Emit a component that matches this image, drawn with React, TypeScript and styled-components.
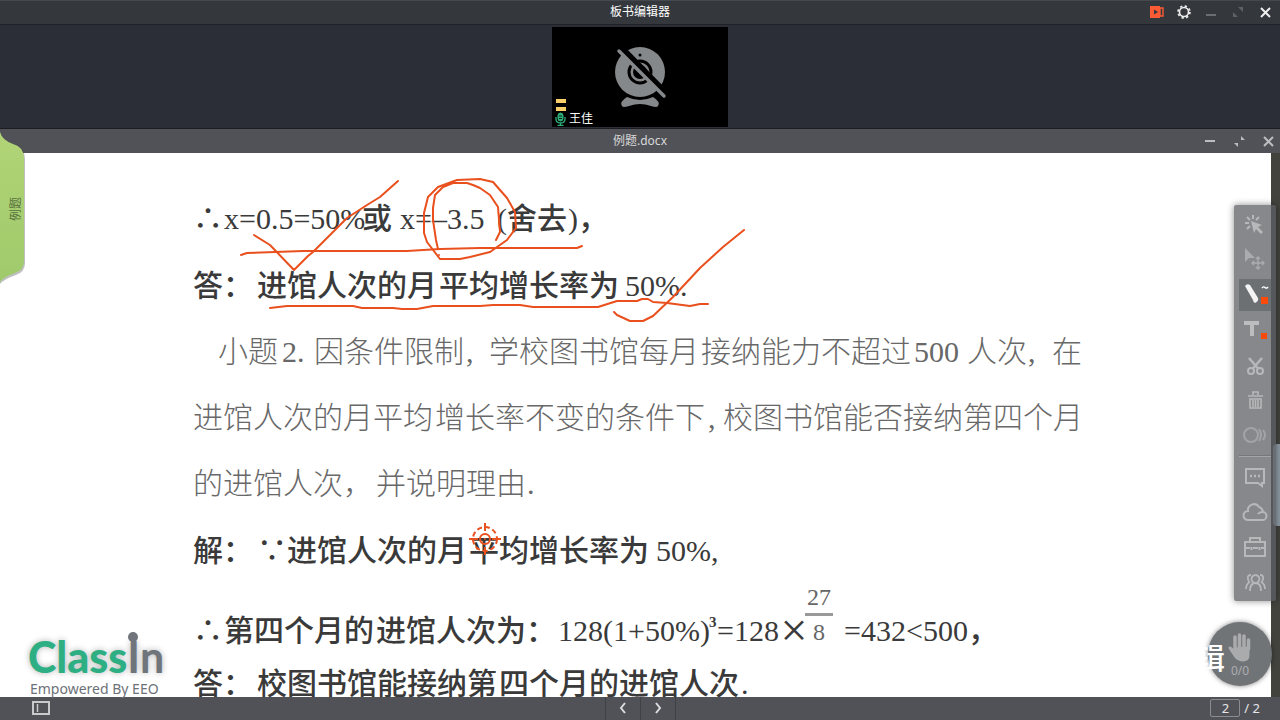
import React from "react";
import styled, { createGlobalStyle } from "styled-components";

const ui = `"Noto Sans", "Noto Sans CJK SC", sans-serif`;
const cjk = `"Noto Sans CJK SC", sans-serif`;
const serif = `"Liberation Serif", "Noto Sans CJK SC", serif`;
const ink = "#e9501e";

const GlobalStyle = createGlobalStyle`
  * { box-sizing: border-box; }
  body { margin: 0; font-family: ${ui}; background: #2b2e36; }
  button { border: 0; padding: 0; background: none; color: inherit; font: inherit; }
  svg { display: block; }
`;

const Shell = styled.div`
  position: relative;
  display: flex;
  flex-direction: column;
  height: 100vh;
  overflow: hidden;
`;

const Bar = styled.header<{ $tone: "dark" | "light" }>`
  display: grid;
  grid-template-columns: 1fr auto 1fr;
  align-items: center;
  flex: none;
  height: ${(p) => (p.$tone === "dark" ? 25 : 24)}px;
  background: ${(p) => (p.$tone === "dark" ? "#34373c" : "#515257")};
  box-shadow: ${(p) => (p.$tone === "dark" ? "inset 0 1px #45484d" : "none")};
  border-bottom: ${(p) => (p.$tone === "dark" ? "1px solid #1f2126" : "0")};
  color: ${(p) => (p.$tone === "dark" ? "#ffffff" : "#d8d8da")};
`;

const BarTitle = styled.h1`
  grid-column: 2;
  margin: 0;
  font: 400 12px/20px ${ui};
`;

const BarActions = styled.div<{ $tight?: boolean }>`
  display: flex;
  justify-content: flex-end;
  gap: ${(p) => (p.$tight ? 13 : 11)}px;
  padding-right: ${(p) => (p.$tight ? 4 : 7)}px;
`;

const BarButton = styled.button`
  width: 16px;
  height: 16px;
`;

const VideoStrip = styled.section`
  display: flex;
  justify-content: center;
  flex: none;
  height: 104px;
  padding-top: 2px;
  background: #2b2e36;
  border-bottom: 1px solid #1b1d22;
`;

const VideoTile = styled.div`
  display: flex;
  flex-direction: column;
  justify-content: flex-end;
  position: relative;
  width: 176px;
  height: 100px;
  padding-left: 3px;
  background: #000;
`;

const CameraOff = styled.svg`
  position: absolute;
  left: 58px;
  top: 16px;
`;

const Levels = styled.div`
  display: grid;
  gap: 4px;
  width: 10px;
  margin-left: 1px;
  i { height: 4px; background: #f8cf68; }
`;

const Person = styled.div`
  display: flex;
  align-items: center;
  gap: 3px;
  height: 16px;
  color: #fff;
  font-size: 12px;
  line-height: 18px;
`;

const Workspace = styled.main`
  position: relative;
  display: flex;
  flex: 1;
  min-height: 0;
  background: #fff;
`;

const Paper = styled.article`
  flex: 1;
  min-width: 0;
  padding: 32px 0 0 193px;
  overflow: hidden;
`;

const Line = styled.p<{ $kind?: "bold" | "plain" | "fraction" | "last" }>`
  display: flex;
  align-items: flex-end;
  margin: 0;
  white-space: pre;
  font-size: 30px;
  height: ${(p) => ({ bold: 67, plain: 66, fraction: 80, last: 40 })[p.$kind ?? "bold"]}px;
  --line: ${(p) => (p.$kind === "last" ? 40 : 66)}px;
  color: ${(p) => (p.$kind === "plain" ? "#686868" : "#3a3a3a")};
  font-weight: ${(p) => (p.$kind === "plain" ? 300 : 500)};
`;

const Run = styled.span<{ $w: number; $latin?: boolean }>`
  flex: none;
  width: ${(p) => p.$w}px;
  font-family: ${(p) => (p.$latin ? serif : cjk)};
  line-height: ${(p) => (p.$latin ? "var(--line)" : "calc(var(--line) + 6px)")};
`;

const Power = styled.sup`
  flex: none;
  width: 8px;
  height: 66px;
  font: 700 15px/48px ${serif};
`;

const Fraction = styled.span`
  display: flex;
  flex-direction: column;
  align-items: center;
  flex: none;
  width: 28px;
  margin: 0 11px 18px 0;
  font: 400 24px/28px ${serif};
  color: #666;
  i { width: 28px; height: 3px; margin: 2px 0; background: #999; }
`;

const ScrollTrack = styled.div`
  display: flex;
  justify-content: flex-end;
  flex: none;
  width: 9px;
  padding-top: 291px;
  background: #43433e;
`;

const ScrollThumb = styled.div`
  width: 7px;
  height: 82px;
  border-radius: 4px 0 0 4px;
  background: #8f9ca6;
`;

const Ink = styled.svg`
  position: absolute;
  left: 0;
  top: 0;
  fill: none;
  stroke: ${ink};
  stroke-width: 2;
  stroke-linecap: round;
  stroke-linejoin: round;
  pointer-events: none;
`;

const SideTab = styled.button`
  position: absolute;
  left: 0;
  top: 130px;
  width: 28px;
  height: 158px;
`;

const SideLabel = styled.span`
  position: absolute;
  left: 2px;
  top: 70px;
  width: 25px;
  transform: rotate(-90deg);
  font: 400 12px/18px ${cjk};
  color: #56703c;
`;

const Tools = styled.nav`
  position: absolute;
  right: 4px;
  top: 52px;
  width: 42px;
  padding: 2px 5px 1px;
  background: rgba(92, 94, 100, 0.74);
  border-radius: 2px;
  box-shadow: 0 0 7px rgba(0, 0, 0, 0.45);
`;

const Tool = styled.button<{ $active?: boolean }>`
  display: block;
  width: 32px;
  height: 35px;
  background: ${(p) => (p.$active ? "linear-gradient(transparent 2px, #6c7073 2px, #6c7073 34px, transparent 34px)" : "none")};
`;

const Divider = styled.hr`
  height: 2px;
  margin: 3px 0;
  border: 0;
  border-top: 1px solid #75787c;
  background: #a3a5a8;
`;

const Hand = styled.button`
  position: absolute;
  right: 8px;
  top: 469px;
  display: flex;
  flex-direction: column;
  align-items: center;
  width: 64px;
  height: 64px;
  padding-top: 9px;
  border-radius: 50%;
  background: #717477;
  box-shadow: 0 0 5px rgba(0, 0, 0, 0.5);
  color: #aaacaf;
  font-size: 12px;
  line-height: 16px;
`;

const Caption = styled.span`
  position: absolute;
  right: 55px;
  top: 483px;
  color: #fff;
  font: 500 30px/40px ${cjk};
`;

const Brand = styled.div`
  position: absolute;
  left: 28px;
  top: 478px;
  width: 136px;
  color: #6c7177;
`;

const Wordmark = styled.div`
  display: flex;
  font: 700 43px/52px Lato, sans-serif;
  color: #6f757b;
  text-shadow: 0 0 6px rgba(0, 0, 0, 0.3);
  b { color: #2eaf83; }
`;

const Dotted = styled.span`
  position: relative;
  &::before {
    content: "";
    position: absolute;
    left: 1px;
    top: 1px;
    width: 10px;
    height: 10px;
    border-radius: 50%;
    background: #6f757b;
  }
`;

const Tagline = styled.div`
  padding-left: 2px;
  font: 400 14px/12px "Noto Sans", sans-serif;
  white-space: nowrap;
`;

const Footer = styled.footer`
  display: grid;
  grid-template-columns: 1fr auto 1fr;
  flex: none;
  height: 23px;
  background: #515257;
  color: #e6e6e8;
  font-size: 13px;
`;

const PanelButton = styled.button`
  width: 18px;
  height: 14px;
  margin: 4px 0 0 32px;
`;

const Pager = styled.div`
  display: flex;
  border-left: 1px solid #3f4145;
  button {
    display: flex;
    justify-content: center;
    width: 35px;
    padding-top: 5px;
    border-right: 1px solid #3f4145;
  }
`;

const PageBox = styled.label`
  display: flex;
  justify-content: flex-end;
  gap: 4px;
  padding: 2px 20px 0 0;
  line-height: 19px;
  white-space: pre;
  input {
    width: 30px;
    height: 18px;
    padding: 0;
    border: 1px solid #8b8c90;
    border-radius: 2px;
    background: transparent;
    color: inherit;
    font: 400 13px/16px ${ui};
    text-align: center;
  }
`;

const toolIcons: { name: string; art: React.ReactNode }[] = [
  {
    name: "激光笔",
    art: (
      <g>
        <path d="M12 14 L23 18 L19 20 L24 25 L22 27 L17 22 L15 26Z" fill="#b6b8ba" stroke="none" />
        <path d="M14 8v4M8 10l3 3M6 16h4M8 22l3-3M20 10l-3 3" />
      </g>
    ),
  },
  {
    name: "选择",
    art: (
      <g opacity=".75">
        <path d="M6 6 L16 16 L10 16 L6 20Z" fill="#b6b8ba" stroke="none" />
        <path strokeWidth="1.3" d="M19 15v12M13 21h12M17 17l2-2 2 2M17 25l2 2 2-2M15 19l-2 2 2 2M23 19l2 2-2 2" />
      </g>
    ),
  },
  {
    name: "画笔",
    art: (
      <g>
        <path d="M6 9 Q8 6 11 8 L19 21 Q20 24 16 26 Q14 25 14 23Z" fill="#f4f4f4" stroke="none" />
        <path d="M23 11 q1.500-2 3 -.5 t3 -.5" stroke="#fff" strokeWidth="1.400" />
        <rect x="22" y="20" width="7" height="7" fill="#fb4a09" stroke="none" />
      </g>
    ),
  },
  {
    name: "文字",
    art: (
      <g>
        <path d="M5 9h15v4h-5v11h-4V13H5Z" fill="#bbbdbf" stroke="none" />
        <rect x="22" y="21" width="6" height="6" fill="#fb4a09" stroke="none" />
      </g>
    ),
  },
  {
    name: "剪切",
    art: (
      <g>
        <circle cx="12" cy="24" r="3" />
        <circle cx="21" cy="24" r="3" />
        <path d="M10 11l9.500 11M23 11l-9.500 11" strokeWidth="2.500" />
      </g>
    ),
  },
  {
    name: "删除",
    art: <path d="M9 14h15M14 13v-3h5v3M11 17v9h11v-9zM14 18v7M16.500 18v7M19 18v7" strokeWidth="1.600" />,
  },
  {
    name: "图形",
    art: (
      <g opacity=".6">
        <circle cx="12" cy="18" r="7" />
        <path d="M20 12q4 6 0 12M24 13q4 5 0 10" />
      </g>
    ),
  },
  {
    name: "聊天",
    art: (
      <g>
        <path d="M7 9h18v14h-2v3l-4-3H7z" />
        <path d="M11 16h2M15 16h2M19 16h2" strokeWidth="2.500" />
      </g>
    ),
  },
  {
    name: "云盘",
    art: <path d="M9 25h14a4 4 0 0 0 1-8a6 6 0 0 0-4-5a6 6 0 0 0-11 4a4.500 4.500 0 0 0 0 9M24 17a5 5 0 0 0-5 2" />,
  },
  {
    name: "工具箱",
    art: <path d="M6 12h20v14H6zM11 12V8h10v4M6 18h5M14 18h5M22 18h4M12.500 17v3M20.500 17v3" />,
  },
  {
    name: "成员",
    art: (
      <path d="M16.500 10a4 4 0 1 1-.1 0M11 26q0-8 5.500-8t5.500 8M12 10q-4 0-3 4t2 3M21 10q4 0 3 4t-2 3M7 24q0-5 4-7M26 24q0-5-4-7" strokeWidth="1.800" />
    ),
  },
];

function ToolButton({ name, art, active }: { name: string; art: React.ReactNode; active?: boolean }) {
  return (
    <Tool $active={active} aria-label={name}>
      <svg width="32" height="35" viewBox="0 0 32 35" fill="none" stroke="#b6b8ba" strokeWidth="2">
        {art}
      </svg>
    </Tool>
  );
}

function Glyph({ children }: { children: React.ReactNode }) {
  return (
    <svg width="16" height="16" viewBox="0 0 16 16" fill="none">
      {children}
    </svg>
  );
}

export default function App() {
  return (
    <Shell>
      <GlobalStyle />
      <Bar $tone="dark">
        <BarTitle>板书编辑器</BarTitle>
        <BarActions>
          <BarButton aria-label="录制">
            <Glyph>
              <path d="M1 2h10v12H1z" fill="#fa5b35" />
              <path d="M11 4h3v8h-3z" stroke="#fa5b35" strokeWidth="1.400" />
              <path d="M5 5.500v5l4-2.500z" fill="#34373c" />
            </Glyph>
          </BarButton>
          <BarButton aria-label="设置">
            <Glyph>
              <circle cx="8" cy="8" r="4.500" stroke="#eee" strokeWidth="1.600" />
              <circle cx="8" cy="8" r="5.900" stroke="#eee" strokeWidth="1.800" strokeDasharray="2.300 2.330" />
            </Glyph>
          </BarButton>
          <BarButton aria-label="最小化">
            <Glyph><path d="M3 11h10" stroke="#6b6d71" strokeWidth="2" /></Glyph>
          </BarButton>
          <BarButton aria-label="最大化">
            <Glyph><path d="M8 3h5v5zM3 8v5h5z" fill="#5d6064" /></Glyph>
          </BarButton>
          <BarButton aria-label="关闭">
            <Glyph><path d="M4 4l9 9M13 4l-9 9" stroke="#eee" strokeWidth="2" /></Glyph>
          </BarButton>
        </BarActions>
      </Bar>

      <VideoStrip>
        <VideoTile>
          <CameraOff width="60" height="68" viewBox="0 0 60 68">
            <circle cx="30" cy="29" r="25" fill="#85888b" />
            <path d="M17 54q13 6 26 0q8 5 5 9q-1 2-7 0q-11-4-22 0q-6 2-7 0q-3-4 5-9z" fill="#85888b" />
            <circle cx="30" cy="29" r="11" fill="none" stroke="#000" strokeWidth="3" />
            <circle cx="30" cy="29" r="7" fill="#000" />
            <circle cx="30" cy="12" r="1.500" fill="#000" />
            <path d="M11 5l45 46" stroke="#000" strokeWidth="7" />
            <path d="M9 8l45 45" stroke="#85888b" strokeWidth="3.500" strokeLinecap="round" />
          </CameraOff>
          <Levels><i /><i /></Levels>
          <Person>
            <svg width="11" height="14" viewBox="0 0 11 14" fill="none" stroke="#2eaf7b">
              <rect x="3" y="1" width="5" height="8" rx="2.500" fill="#2eaf7b" />
              <path d="M1 5v2q0 4 4.500 4t4.500-4V5M5.500 11v2M2.500 13.500h6" strokeWidth="1.300" />
              <path d="M4 4h3M4 6.500h3" stroke="#06281b" />
            </svg>
            王佳
          </Person>
        </VideoTile>
      </VideoStrip>

      <Bar $tone="light">
        <BarTitle>例题.docx</BarTitle>
        <BarActions $tight>
          <BarButton aria-label="最小化文档">
            <Glyph><path d="M3 8h10" stroke="#bdbdc0" strokeWidth="2" /></Glyph>
          </BarButton>
          <BarButton aria-label="还原文档">
            <Glyph><path d="M10 3v4h4zM3 10h4v4z" fill="#bdbdc0" /></Glyph>
          </BarButton>
          <BarButton aria-label="关闭文档">
            <Glyph><path d="M4 4l9 9M13 4l-9 9" stroke="#bdbdc0" strokeWidth="2" /></Glyph>
          </BarButton>
        </BarActions>
      </Bar>

      <Workspace>
        <Paper>
          <Line>
            <Run $w={31}>∴</Run>
            <Run $w={138} $latin>x=0.5=50%</Run>
            <Run $w={38}>或</Run>
            <Run $w={32} $latin>x=</Run>
            <Run $w={15} $latin>–</Run>
            <Run $w={15} $latin>3</Run>
            <Run $w={35} $latin>.5</Run>
            <Run $w={10} $latin>(</Run>
            <Run $w={61}>舍去</Run>
            <Run $w={10} $latin>)</Run>
            <Run $w={30}>，</Run>
          </Line>
          <Line>
            <Run $w={64}>答：</Run>
            <Run $w={182}>进馆人次的月</Run>
            <Run $w={186}>平均增长率为</Run>
            <Run $w={60} $latin>50%.</Run>
          </Line>
          <Line $kind="plain">
            <Run $w={25}> </Run>
            <Run $w={64}>小题</Run>
            <Run $w={32} $latin>2.</Run>
            <Run $w={152}>因条件限制</Run>
            <Run $w={23} $latin>,</Run>
            <Run $w={212}>学校图书馆每月</Run>
            <Run $w={213}>接纳能力不超过</Run>
            <Run $w={53} $latin>500</Run>
            <Run $w={61}>人次</Run>
            <Run $w={24} $latin>,</Run>
            <Run $w={30}>在</Run>
          </Line>
          <Line $kind="plain">
            <Run $w={242}>进馆人次的月平均</Run>
            <Run $w={273}>增长率不变的条件下</Run>
            <Run $w={15} $latin>,</Run>
            <Run $w={360}>校图书馆能否接纳第四个月</Run>
          </Line>
          <Line $kind="plain">
            <Run $w={183}>的进馆人次，</Run>
            <Run $w={151}>并说明理由</Run>
            <Run $w={15} $latin>.</Run>
          </Line>
          <Line>
            <Run $w={64}>解：</Run>
            <Run $w={30}>∵</Run>
            <Run $w={182}>进馆人次的月</Run>
            <Run $w={187}>平均增长率为</Run>
            <Run $w={60} $latin>50%,</Run>
          </Line>
          <Line $kind="fraction">
            <Run $w={31}>∴</Run>
            <Run $w={152}>第四个月的</Run>
            <Run $w={182}>进馆人次为：</Run>
            <Run $w={45} $latin>128</Run>
            <Run $w={10} $latin>(</Run>
            <Run $w={96} $latin>1+50%)</Run>
            <Power>3</Power>
            <Run $w={62} $latin>=128</Run>
            <Run $w={26}>×</Run>
            <Fraction><span>27</span><i /><span>8</span></Fraction>
            <Run $w={62} $latin>=432</Run>
            <Run $w={62} $latin>&lt;500</Run>
            <Run $w={30}>，</Run>
          </Line>
          <Line $kind="last">
            <Run $w={64}>答：</Run>
            <Run $w={242}>校图书馆能接纳第</Run>
            <Run $w={242}>四个月的进馆人次</Run>
            <Run $w={15} $latin>.</Run>
          </Line>
        </Paper>
        <ScrollTrack><ScrollThumb /></ScrollTrack>

        <Ink width="780" height="420" viewBox="0 153 780 420" aria-hidden="true">
          <path d="M254 235L270 245L294 270L308 256L313 252L327 238L347 218L367 205L380 197L398 181" />
          <path d="M241 255L247 253L303 251H407L440 249L480 248H577L582 246" />
          <path d="M440 259L427 242L424 233V213L428 197L438 187L457 180L480 179L493 182L507 198L515 212L516 228L507 240L490 252L470 257L460 259H440" />
          <path d="M438 249L436 240L433 220V208L435 195L443 187L453 183H467L473 185L480 188L490 195L498 207L500 232L496 240M439 255v.1" />
          <path d="M270 308L287 306H353L362 308H393L402 309H417L433 306H480L493 305H520L533 307H598L617 301H637L642 299H648L653 302L667 303L690 306L700 304H708" />
          <path d="M614 312L617 315L630 321H643L653 316L673 297L700 268L723 247L744 230" />
          <circle cx="485" cy="539" r="12" strokeDasharray="5 3" strokeLinecap="butt" />
          <circle cx="485" cy="539" r="5" />
          <path d="M485 523v8M485 547v8M469 539h9M492 539h9" strokeLinecap="butt" />
          <circle cx="485" cy="539" r="1" fill={ink} stroke="none" />
        </Ink>

        <Brand>
          <Wordmark><b>Class</b><Dotted>I</Dotted><span>n</span></Wordmark>
          <Tagline>Empowered By EEO</Tagline>
        </Brand>

        <Tools aria-label="工具栏">
          {toolIcons.slice(0, 7).map((t) => (
            <ToolButton key={t.name} {...t} active={t.name === "画笔"} />
          ))}
          <Divider />
          {toolIcons.slice(7).map((t) => (
            <ToolButton key={t.name} {...t} />
          ))}
        </Tools>

        <Hand>
          <svg width="26" height="32" viewBox="0 0 26 32" stroke="#a9abad" strokeLinecap="round" fill="#a9abad">
            <path d="M8 18V6M12.500 17V4M17 17V5M21.500 18V9" strokeWidth="3.500" />
            <path d="M8 18v3L3 17l6 9q3 3 7 3q5 0 5-5v-7z" strokeLinejoin="round" strokeWidth="3" />
          </svg>
          0/0
        </Hand>
        <Caption>辑</Caption>
      </Workspace>

      <Footer>
        <PanelButton aria-label="侧边栏">
          <svg width="18" height="14" viewBox="0 0 18 14" fill="none" stroke="#c9cacc">
            <path d="M1 1h16v12H1z" strokeWidth="2" />
            <path d="M5.500 3v8" strokeWidth="1.500" />
          </svg>
        </PanelButton>
        <Pager>
          <button aria-label="上一页">
            <svg width="10" height="12" viewBox="0 0 10 12" fill="none" stroke="#dcdcde" strokeWidth="2"><path d="M7 1L3 6l4 5" /></svg>
          </button>
          <button aria-label="下一页">
            <svg width="10" height="12" viewBox="0 0 10 12" fill="none" stroke="#dcdcde" strokeWidth="2"><path d="M3 1l4 5l-4 5" /></svg>
          </button>
        </Pager>
        <PageBox>
          <input aria-label="页码" defaultValue="2" />
          <span>/ 2</span>
        </PageBox>
      </Footer>

      <SideTab>
        <svg width="28" height="158" viewBox="0 0 28 158">
          <defs>
            <linearGradient id="leaf" x2="0" y2="1">
              <stop stopColor="#b1d477" />
              <stop offset="1" stopColor="#9fca6b" />
            </linearGradient>
          </defs>
          <path d="M0 3q2 8 14 12q11 3 11 14v104q0 9-9 12q-12 4-16 9z" fill="#000" opacity=".25" />
          <path d="M0 2q2 8 13 12q11 3 11 14v103q0 9-9 12q-12 4-15 9z" fill="url(#leaf)" />
        </svg>
        <SideLabel>例题</SideLabel>
      </SideTab>
    </Shell>
  );
}
